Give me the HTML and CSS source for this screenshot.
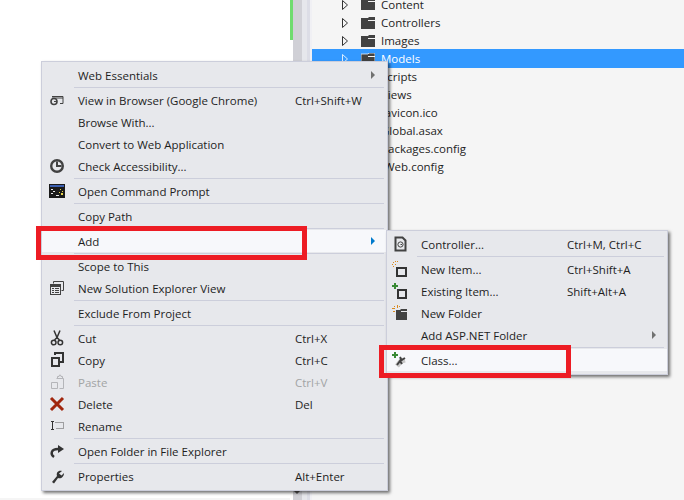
FILE: index.html
```html
<!DOCTYPE html>
<html lang="en">
<head>
<meta charset="utf-8">
<title>Solution Explorer context menu</title>
<link rel="stylesheet" href="styles.css">
</head>
<body>
<div class="page">
  <div class="editor"></div>
  <div class="margin-green"></div>
  <div class="scroll"><span class="marker"></span><span class="down"></span></div>
  <div class="strip"></div>
  <div class="explorer">
    <div class="tree">
      <div class="node"><svg class="exp" width="6" height="10" viewBox="0 0 6 10"><path d="M.5.5v9L5.500 5z" fill="none" stroke="#333"/></svg><svg class="fold" width="14" height="12" viewBox="0 0 14 12"><path d="M0 1h7l1-1h6v12H0z" fill="#424242"/><path d="M7 3h7v1H7z" fill="#f5f5f5"/></svg><span>Content</span></div>
      <div class="node"><svg class="exp" width="6" height="10" viewBox="0 0 6 10"><path d="M.5.5v9L5.500 5z" fill="none" stroke="#333"/></svg><svg class="fold" width="14" height="12" viewBox="0 0 14 12"><path d="M0 1h7l1-1h6v12H0z" fill="#424242"/><path d="M7 3h7v1H7z" fill="#f5f5f5"/></svg><span>Controllers</span></div>
      <div class="node"><svg class="exp" width="6" height="10" viewBox="0 0 6 10"><path d="M.5.5v9L5.500 5z" fill="none" stroke="#333"/></svg><svg class="fold" width="14" height="12" viewBox="0 0 14 12"><path d="M0 1h7l1-1h6v12H0z" fill="#424242"/><path d="M7 3h7v1H7z" fill="#f5f5f5"/></svg><span>Images</span></div>
      <div class="node selected"><svg class="exp" width="6" height="10" viewBox="0 0 6 10"><path d="M.5.5v9L5.500 5z" fill="none" stroke="#d8ecff"/></svg><svg class="fold" width="14" height="12" viewBox="0 0 14 12"><path d="M0 1h7l1-1h6v12H0z" fill="#424242" stroke="#e8f2ff" stroke-width=".8"/><path d="M7 3h7v1H7z" fill="#f5f5f5"/></svg><span>Models</span></div>
      <div class="node"><span>Scripts</span></div>
      <div class="node"><span>Views</span></div>
      <div class="node"><span>favicon.ico</span></div>
      <div class="node"><span>Global.asax</span></div>
      <div class="node"><span>packages.config</span></div>
      <div class="node"><span class="shifted">Web.config</span></div>
    </div>
  </div>
</div>

<div class="menu main">
  <div class="item"><span class="ic"></span><span class="lbl">Web Essentials</span><span class="key"></span><span class="arr"></span></div>
  <div class="sep"></div>
  <div class="item"><span class="ic"><svg width="16" height="16" viewBox="0 0 16 16"><circle cx="5" cy="9.500" r="3" fill="none" stroke="#424242" stroke-width="1.600"/><path d="M5 9.500h3" stroke="#424242"/><path d="M3 4.500h11v7h-3M14 6H3" fill="none" stroke="#424242"/></svg></span><span class="lbl">View in Browser (Google Chrome)</span><span class="key">Ctrl+Shift+W</span><span></span></div>
  <div class="item"><span class="ic"></span><span class="lbl">Browse With...</span><span class="key"></span><span></span></div>
  <div class="item"><span class="ic"></span><span class="lbl">Convert to Web Application</span><span class="key"></span><span></span></div>
  <div class="item"><span class="ic"><svg width="16" height="16" viewBox="0 0 16 16"><circle cx="8" cy="8" r="5.800" fill="none" stroke="#424242" stroke-width="2.400"/><path d="M7 3.500h2V7h3.500v2H7z" fill="#424242"/></svg></span><span class="lbl">Check Accessibility...</span><span class="key"></span><span></span></div>
  <div class="sep"></div>
  <div class="item"><span class="ic"><svg width="16" height="16" viewBox="0 0 16 16"><path d="M0 1h16v14H0z" fill="#1a1a1a"/><path d="M1 2h14v2H1z" fill="#3b5fb0"/><path d="M2 6h2v1H2zM4 8h2v1H4zM2 10h2v1H2zM7 12h3v1H7z" fill="#e8e8e8"/><path d="M11 6h1v1h-1zM13 8h1v1h-1zM10 9h1v1h-1zM12 10h2v2h-2z" fill="#e8d44a"/></svg></span><span class="lbl">Open Command Prompt</span><span class="key"></span><span></span></div>
  <div class="sep"></div>
  <div class="item"><span class="ic"></span><span class="lbl">Copy Path</span><span class="key"></span><span></span></div>
  <div class="sep"></div>
  <div class="item hot"><span class="ic"></span><span class="lbl">Add</span><span class="key"></span><span class="arr blue"></span></div>
  <div class="sep"></div>
  <div class="item"><span class="ic"></span><span class="lbl">Scope to This</span><span class="key"></span><span></span></div>
  <div class="item"><span class="ic"><svg width="16" height="16" viewBox="0 0 16 16"><path d="M4.500 3.500V1.500h10v9h-2" fill="none" stroke="#424242"/><path d="M1 4h11v11H1z" fill="#424242"/><path d="M2 7h9v7H2z" fill="#e7e8ec"/><path d="M3 8h2v1H3zM6 8h4v1H6zM3 10h2v1H3zM6 10h4v1H6zM3 12h2v1H3zM6 12h4v1H6z" fill="#424242"/></svg></span><span class="lbl">New Solution Explorer View</span><span class="key"></span><span></span></div>
  <div class="sep"></div>
  <div class="item"><span class="ic"></span><span class="lbl">Exclude From Project</span><span class="key"></span><span></span></div>
  <div class="sep"></div>
  <div class="item"><span class="ic"><svg width="16" height="16" viewBox="0 0 16 16"><path d="M5 .5L8 7.500 11 .5M5.500 10L8 7.500 10.500 10" fill="none" stroke="#333" stroke-width="1.500"/><circle cx="4.700" cy="12.500" r="2.300" fill="none" stroke="#333" stroke-width="1.500"/><circle cx="11.300" cy="12.500" r="2.300" fill="none" stroke="#333" stroke-width="1.500"/></svg></span><span class="lbl">Cut</span><span class="key">Ctrl+X</span><span></span></div>
  <div class="item"><span class="ic"><svg width="16" height="16" viewBox="0 0 16 16"><path d="M6 3V1h8v9h-3" fill="none" stroke="#333" stroke-width="2"/><path d="M3 6h7v8H3z" fill="none" stroke="#333" stroke-width="2"/></svg></span><span class="lbl">Copy</span><span class="key">Ctrl+C</span><span></span></div>
  <div class="item off"><span class="ic"><svg width="16" height="16" viewBox="0 0 16 16"><path d="M8.500 4.500V2.500h1.500l.5-1.500h1l.5 1.500h1.500v2zM7.500 4.500h7v10h-4M2.500 8.500h6v6h-6z" fill="none" stroke="#b4b5b9"/></svg></span><span class="lbl">Paste</span><span class="key">Ctrl+V</span><span></span></div>
  <div class="item"><span class="ic"><svg width="16" height="16" viewBox="0 0 16 16"><path d="M2 2l12 12M14 2L2 14" stroke="#a1260d" stroke-width="3"/></svg></span><span class="lbl">Delete</span><span class="key">Del</span><span></span></div>
  <div class="item"><span class="ic"><svg width="16" height="16" viewBox="0 0 16 16"><path d="M2 3h3v1H4v7h1v1H2v-1h1V4H2z" fill="#333"/><path d="M6.500 4.500h8v6h-8" fill="none" stroke="#555" stroke-dasharray="1 1"/></svg></span><span class="lbl">Rename</span><span class="key"></span><span></span></div>
  <div class="sep"></div>
  <div class="item"><span class="ic"><svg width="16" height="16" viewBox="0 0 16 16"><path d="M5 14C1 11 2 6 9 6" fill="none" stroke="#333" stroke-width="2.400"/><path d="M9 2l6 4-6 4z" fill="#333"/></svg></span><span class="lbl">Open Folder in File Explorer</span><span class="key"></span><span></span></div>
  <div class="sep"></div>
  <div class="item"><span class="ic"><svg width="16" height="16" viewBox="0 0 16 16"><path d="M3 14l5-6C7 5 9 2 13 3l-3 2.500 2.500 2L15 5c0 4-3 6-6 5l-4 5.500z" fill="#333"/></svg></span><span class="lbl">Properties</span><span class="key">Alt+Enter</span><span></span></div>
</div>

<div class="menu sub">
  <div class="item"><span class="ic"><svg width="16" height="16" viewBox="0 0 16 16"><path d="M3.500 1.500h7l3 3v10h-10z" fill="none" stroke="#424242" stroke-width="2"/><circle cx="8.500" cy="8.500" r="2.600" fill="none" stroke="#424242"/><path d="M8.500 8.500h1.500" stroke="#424242"/></svg></span><span class="lbl">Controller...</span><span class="key">Ctrl+M, Ctrl+C</span><span></span></div>
  <div class="sep"></div>
  <div class="item"><span class="ic"><svg width="16" height="16" viewBox="0 0 16 16"><path d="M5 7h9v8H5z" fill="none" stroke="#333" stroke-width="2"/><path d="M0 3h1v1H0zM1 1h1v1H1zM3 0h1v1H3zM5 0h1v1H5zM1 5h1v1H1zM3 3h1v1H3z" fill="#d98a1e"/></svg></span><span class="lbl">New Item...</span><span class="key">Ctrl+Shift+A</span><span></span></div>
  <div class="item"><span class="ic"><svg width="16" height="16" viewBox="0 0 16 16"><path d="M6 7h8v8H6z" fill="none" stroke="#333" stroke-width="2"/><path d="M2 0h2v2h2v2H4v2H2V4H0V2h2z" fill="#388a34"/></svg></span><span class="lbl">Existing Item...</span><span class="key">Shift+Alt+A</span><span></span></div>
  <div class="item"><span class="ic"><svg width="16" height="16" viewBox="0 0 16 16"><path d="M4 5h4l1-1h6v11H4z" fill="#424242"/><path d="M9 6h6v1H9z" fill="#e7e8ec"/><path d="M0 3h3v1H0zM2 1h1v1H2zM5 0h1v3H5zM7 1h1v1H7zM1 6h2v1H1z" fill="#d98a1e"/></svg></span><span class="lbl">New Folder</span><span class="key"></span><span></span></div>
  <div class="item"><span class="ic"></span><span class="lbl">Add ASP.NET Folder</span><span class="key"></span><span class="arr"></span></div>
  <div class="sep"></div>
  <div class="item hot"><span class="ic"><svg width="16" height="16" viewBox="0 0 16 16"><path d="M5 14l4-5 4-1" fill="none" stroke="#c8c8c8" stroke-width="5"/><path d="M5 13l3-4 2 3M8 9l5-3M8 5l2 4" fill="none" stroke="#424242" stroke-width="2"/><path d="M2 0h2v2h2v2H4v2H2V4H0V2h2z" fill="#388a34"/></svg></span><span class="lbl">Class...</span><span class="key"></span><span></span></div>
</div>

<div class="callout add"></div>
<div class="callout cls"></div>
</body>
</html>
```

FILE: styles.css
```css
html, body {
  margin: 0;
  padding: 0;
}

body {
  width: 684px;
  height: 500px;
  overflow: hidden;
  background: #fff;
  font-family: "Open Sans", "Noto Sans", sans-serif;
  font-size: 11.5px;
  color: #1e1e1e;
}

.page {
  display: flex;
  height: 500px;
}

.editor {
  width: 290px;
  background: #fff;
  box-sizing: border-box;
  border-bottom: 2px solid #f5f5f5;
}

.margin-green {
  width: 3px;
  height: 40px;
  background: #6fdc6f;
  flex: none;
}

.scroll {
  display: flex;
  flex-direction: column;
  justify-content: space-between;
  width: 9px;
  flex: none;
  box-sizing: border-box;
  padding-bottom: 6px;
  background: #d0d0d6;
}

.strip {
  width: 10px;
  flex: none;
  background: linear-gradient(to right, #e6e7ec 0 5px, #dcdde6 5px 8px, #f0f0f4 8px);
}

.marker {
  display: block;
  width: 3px;
  height: 3px;
  margin: 24px 0 0 9px;
  background: #0000d8;
}

.down {
  display: block;
  width: 0;
  height: 0;
  margin-left: 1px;
  border-top: 3px solid #555;
  border-left: 3px solid transparent;
  border-right: 3px solid transparent;
}

.explorer {
  flex: 1;
  background: #f5f5f5;
  overflow: hidden;
}

.node {
  display: flex;
  align-items: center;
  height: 18px;
  padding-left: 29px;
  box-sizing: border-box;
}

.node:first-child {
  height: 14px;
  align-items: flex-start;
}

.node span {
  margin-left: 40px;
  padding-bottom: 1px;
  line-height: 10px;
  white-space: nowrap;
}

.node .shifted {
  margin-left: 43px;
}

.exp {
  flex: none;
  margin-left: 1px;
}

.fold {
  flex: none;
  margin-left: 13px;
}

.node:first-child .fold {
  margin-top: -2px;
}

.exp + .fold + span {
  margin-left: 6px;
}

.selected {
  background: #3399ff;
  color: #fff;
  box-shadow: 0 -1px 0 #3399ff;
}

.menu {
  position: absolute;
  box-sizing: border-box;
  padding: 2px 0;
  background: #e7e8ec;
  border: 1px solid #cccedb;
  box-shadow: 2px 2px 3px rgba(0, 0, 0, 0.55);
}

.main {
  left: 41px;
  top: 61px;
  width: 347px;
  height: 430px;
}

.sub {
  left: 386px;
  top: 230px;
  width: 282px;
  height: 145px;
}

.item {
  display: grid;
  align-items: center;
  height: 22px;
}

.main .item {
  grid-template-columns: 36px 217px 76px 15px;
}

.sub .item {
  grid-template-columns: 34px 146px 85px 15px;
}

.ic {
  display: flex;
  align-items: center;
}

.main .ic svg {
  margin-left: 7px;
}

.sub .ic svg {
  margin-left: 5px;
}

.lbl,
.key {
  white-space: nowrap;
}

.hot {
  background: #f7f8fb;
}

.off {
  color: #a2a4a5;
}

.sep {
  height: 1px;
  margin: 1px 3px 1px 32px;
  background: #cccedb;
}

.sub .sep {
  margin-left: 30px;
}

.arr {
  width: 0;
  height: 0;
  border-left: 4px solid #717171;
  border-top: 4px solid transparent;
  border-bottom: 4px solid transparent;
}

.arr.blue {
  border-left-color: #007acc;
}

.callout {
  position: absolute;
  box-sizing: border-box;
  border: 5px solid #ed1c24;
}

.add {
  left: 36px;
  top: 226px;
  width: 271px;
  height: 34px;
}

.cls {
  left: 379px;
  top: 345px;
  width: 192px;
  height: 33px;
}
```
